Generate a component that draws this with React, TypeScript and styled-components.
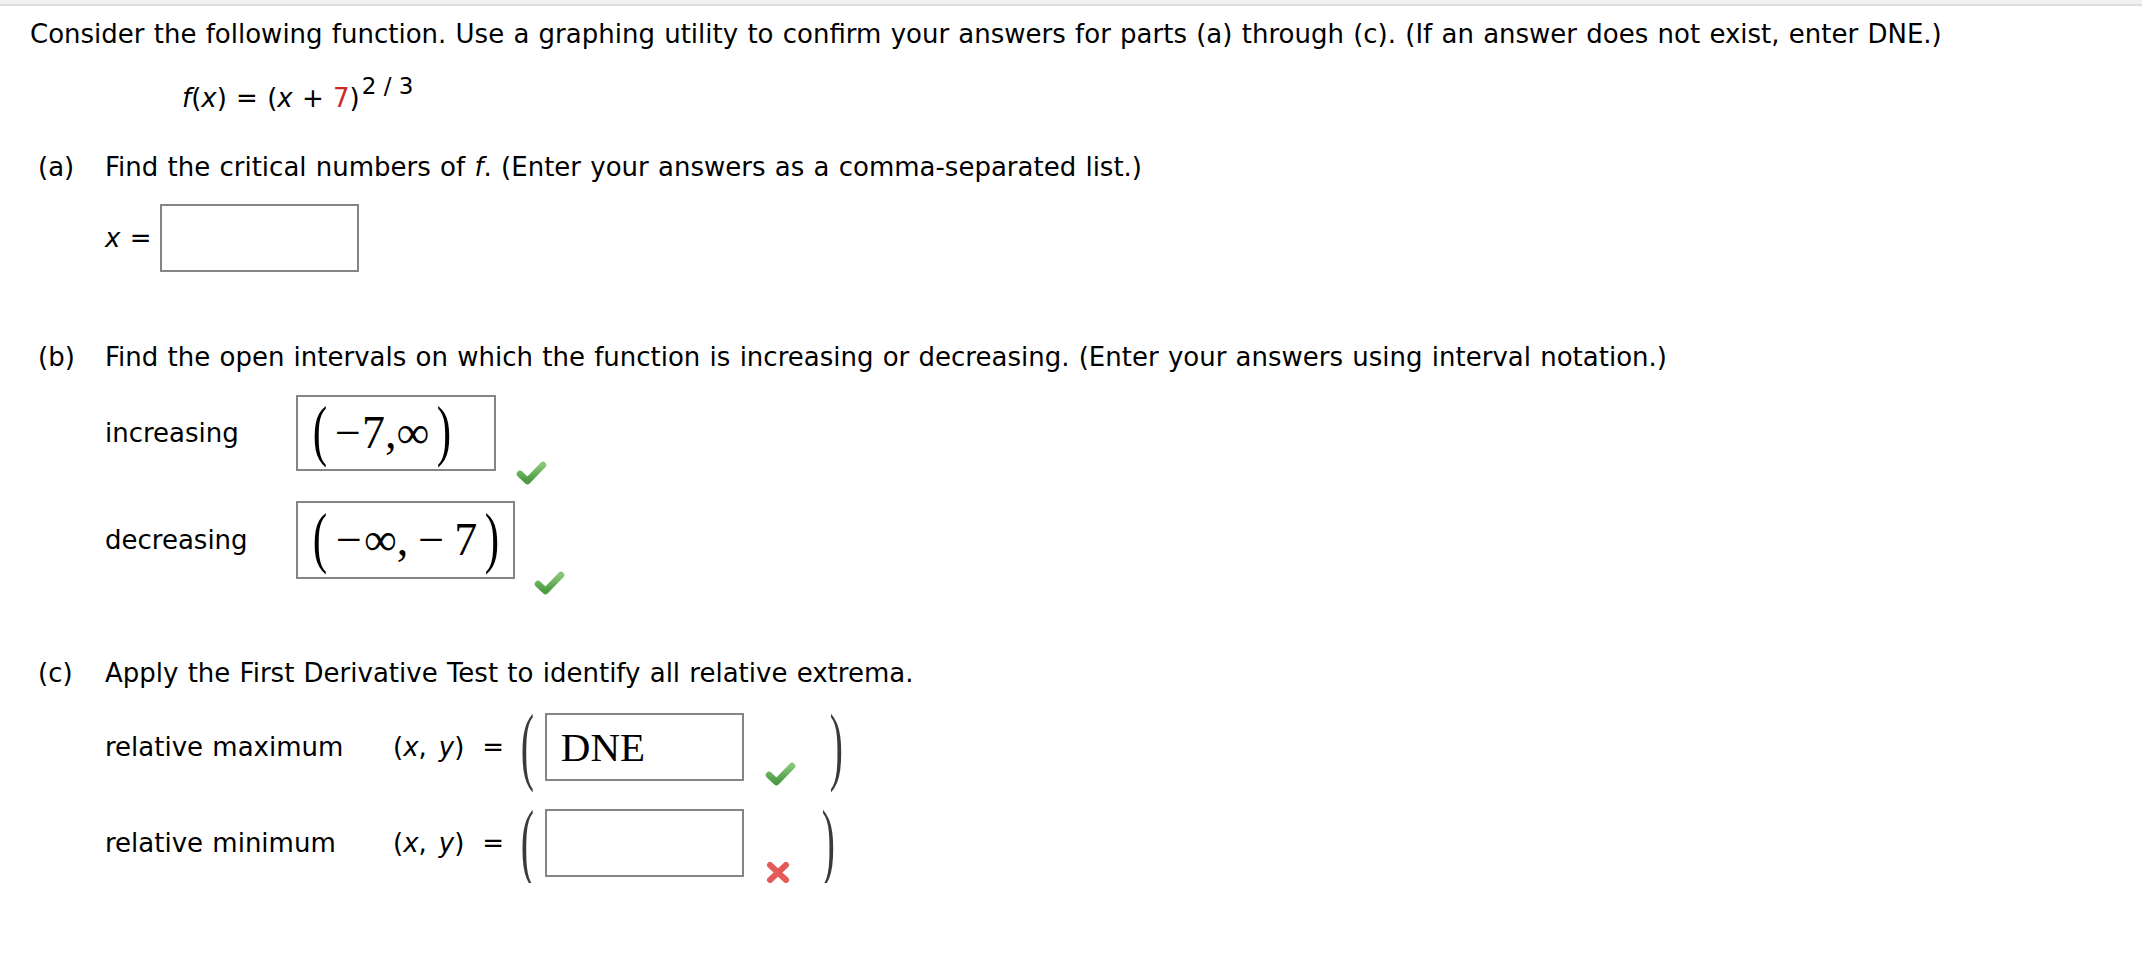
import { FC, ReactNode } from "react";
import styled, { createGlobalStyle } from "styled-components";

const GlobalStyle = createGlobalStyle`
  html, body {
    margin: 0;
    padding: 0;
    background: #ffffff;
  }
  body {
    font-family: "DejaVu Sans", Verdana, sans-serif;
    color: #000000;
  }
`;

const TopStrip = styled.div`
  height: 4px;
  background: #f1f1f1;
  border-bottom: 2px solid #dedede;
`;

const Page = styled.div`
  padding: 0 30px;
  font-size: 26px;
  line-height: 34px;
  word-spacing: 1px;
`;

const Intro = styled.p`
  margin: 11px 0 0;
  white-space: nowrap;
`;

const Formula = styled.div`
  margin-top: 30px;
  padding-left: 152px;
  height: 34px;
  white-space: nowrap;
`;

const Var = styled.i`
  font-style: italic;
`;

const Red = styled.span`
  color: #cc2a1f;
`;

const Sup = styled.sup`
  font-size: 23px;
  line-height: 0;
  vertical-align: 13px;
  margin-left: 2px;
  word-spacing: 0;
`;

const PartHeader = styled.div<{ $gap: number }>`
  display: flex;
  margin-top: ${(p) => p.$gap}px;
  padding-left: 8px;
  height: 34px;
  white-space: nowrap;
`;

const PartLabel = styled.span`
  width: 67px;
  flex: none;
`;

const AnswerRow = styled.div<{ $gap: number; $height: number }>`
  display: flex;
  align-items: center;
  margin-top: ${(p) => p.$gap}px;
  padding-left: 75px;
  height: ${(p) => p.$height}px;
  white-space: nowrap;
`;

const RowLabel = styled.span<{ $width: number }>`
  width: ${(p) => p.$width}px;
  flex: none;
`;

const AnswerBox = styled.div<{ $width: number; $height: number; $left?: number }>`
  box-sizing: border-box;
  width: ${(p) => p.$width}px;
  height: ${(p) => p.$height}px;
  margin-left: ${(p) => p.$left ?? 0}px;
  border: 2px solid #858585;
  background: #ffffff;
  display: flex;
  align-items: center;
  padding-left: 14px;
  flex: none;
`;

const MathText = styled.span<{ $size?: number }>`
  font-family: "Liberation Serif", "Times New Roman", serif;
  font-size: ${(p) => p.$size ?? 46}px;
  line-height: 1;
  display: inline-flex;
  align-items: center;
  white-space: nowrap;
  word-spacing: 0;
`;

const MathParen = styled.span<{ $side: "l" | "r" }>`
  display: inline-block;
  font-size: 48px;
  line-height: 1;
  transform: scale(0.9, 1.4) translateY(-2px);
  margin: ${(p) => (p.$side === "l" ? "0 6px 0 0" : "0 0 0 7px")};
`;

const MathOp = styled.span<{ $space?: number }>`
  margin: 0 ${(p) => p.$space ?? 0}px;
`;

const Mark = styled.span<{ $left: number; $drop: number }>`
  align-self: flex-end;
  margin-left: ${(p) => p.$left}px;
  margin-bottom: -${(p) => p.$drop}px;
  display: flex;
  flex: none;
`;

const Pair = styled.span`
  display: flex;
  align-items: center;
  flex: none;
  white-space: pre;
`;

const PairY = styled.i`
  font-style: italic;
  margin-left: 12px;
`;

const Equals = styled.span`
  margin: 0 16px 0 18px;
`;

const Delim = styled.span<{ $left?: number }>`
  font-family: "Liberation Serif", "Times New Roman", serif;
  font-size: 44px;
  line-height: 44px;
  color: #3a3a3a;
  display: inline-block;
  transform: scale(0.9, 1.95);
  margin-left: ${(p) => p.$left ?? 0}px;
  flex: none;
`;

const CheckIcon: FC = () => (
  <svg width="33" height="27" viewBox="0 0 33 27">
    <defs>
      <linearGradient id="chk" x1="0" y1="0" x2="0" y2="1">
        <stop offset="0" stopColor="#86c777" />
        <stop offset="1" stopColor="#4c9a42" />
      </linearGradient>
    </defs>
    <path
      d="M5 15 L12.5 22 L28 6"
      fill="none"
      stroke="url(#chk)"
      strokeWidth="6.5"
      strokeLinecap="round"
      strokeLinejoin="round"
    />
  </svg>
);

const CrossIcon: FC = () => (
  <svg width="28" height="25" viewBox="0 0 28 25">
    <path
      d="M6 5 L22 20 M22 5 L6 20"
      fill="none"
      stroke="#e35a5a"
      strokeWidth="6"
      strokeLinecap="round"
    />
  </svg>
);

const Interval: FC<{ children: ReactNode }> = ({ children }) => (
  <MathText>
    <MathParen $side="l">(</MathParen>
    {children}
    <MathParen $side="r">)</MathParen>
  </MathText>
);

const Point: FC = () => (
  <Pair>
    (<Var>x</Var>,<PairY>y</PairY>)<Equals>=</Equals>
  </Pair>
);

const App: FC = () => (
  <>
    <GlobalStyle />
    <TopStrip />
    <Page>
      <Intro>
        Consider the following function. Use a graphing utility to confirm your answers for parts (a)
        through (c). (If an answer does not exist, enter DNE.)
      </Intro>

      <Formula>
        <Var>f</Var>(<Var>x</Var>) = (<Var>x</Var> + <Red>7</Red>)
        <Sup>2 / 3</Sup>
      </Formula>

      <PartHeader $gap={35}>
        <PartLabel>(a)</PartLabel>
        <span>
          Find the critical numbers of <Var>f</Var>. (Enter your answers as a comma-separated list.)
        </span>
      </PartHeader>

      <AnswerRow $gap={20} $height={68}>
        <RowLabel $width={55}>
          <Var>x</Var> =
        </RowLabel>
        <AnswerBox $width={199} $height={68} />
      </AnswerRow>

      <PartHeader $gap={68}>
        <PartLabel>(b)</PartLabel>
        <span>
          Find the open intervals on which the function is increasing or decreasing. (Enter your
          answers using interval notation.)
        </span>
      </PartHeader>

      <AnswerRow $gap={21} $height={76}>
        <RowLabel $width={191}>increasing</RowLabel>
        <AnswerBox $width={200} $height={76}>
          <Interval>
            <MathOp $space={1}>−</MathOp>7,∞
          </Interval>
        </AnswerBox>
        <Mark $left={19} $drop={15}>
          <CheckIcon />
        </Mark>
      </AnswerRow>

      <AnswerRow $gap={30} $height={78}>
        <RowLabel $width={191}>decreasing</RowLabel>
        <AnswerBox $width={219} $height={78}>
          <Interval>
            <MathOp $space={2}>−</MathOp>∞,<MathOp $space={10}>−</MathOp>7
          </Interval>
        </AnswerBox>
        <Mark $left={18} $drop={17}>
          <CheckIcon />
        </Mark>
      </AnswerRow>

      <PartHeader $gap={77}>
        <PartLabel>(c)</PartLabel>
        <span>Apply the First Derivative Test to identify all relative extrema.</span>
      </PartHeader>

      <AnswerRow $gap={17} $height={80}>
        <RowLabel $width={288}>relative maximum</RowLabel>
        <Point />
        <Delim>(</Delim>
        <AnswerBox $width={199} $height={68} $left={10}>
          <MathText $size={41}>DNE</MathText>
        </AnswerBox>
        <Mark $left={20} $drop={0}>
          <CheckIcon />
        </Mark>
        <Delim $left={32}>)</Delim>
      </AnswerRow>

      <AnswerRow $gap={16} $height={80}>
        <RowLabel $width={288}>relative minimum</RowLabel>
        <Point />
        <Delim>(</Delim>
        <AnswerBox $width={199} $height={68} $left={10} />
        <Mark $left={20} $drop={2}>
          <CrossIcon />
        </Mark>
        <Delim $left={29}>)</Delim>
      </AnswerRow>
    </Page>
  </>
);

export default App;
